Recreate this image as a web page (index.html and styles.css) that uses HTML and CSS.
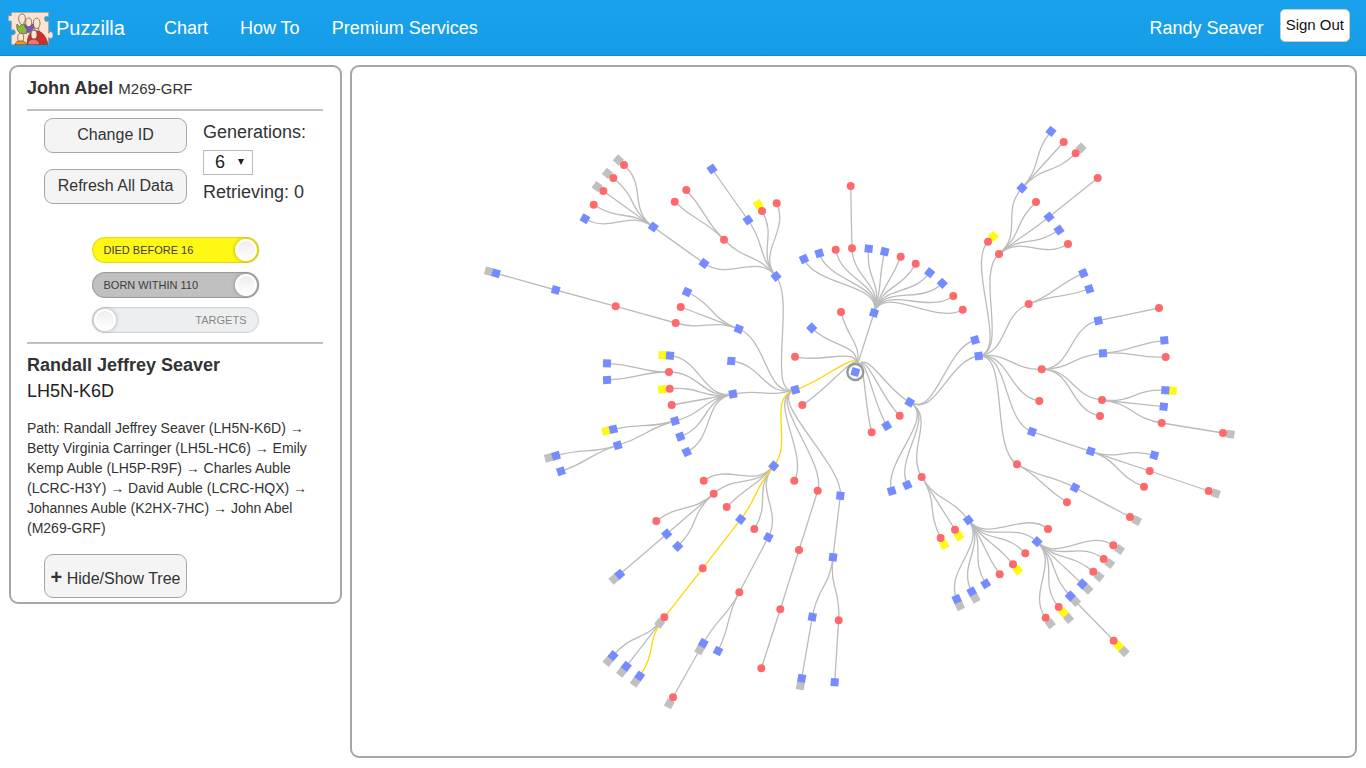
FILE: index.html
```html
<!DOCTYPE html>
<html lang="en">
<head>
<meta charset="utf-8">
<title>Puzzilla</title>
<link rel="stylesheet" href="styles.css">
</head>
<body>
<header class="navbar">
  <a class="brand" href="#">
    <svg class="logo" viewBox="0 0 135 99" aria-hidden="true">
      <path d="M10 1H122V15C113 10 107 15 110 23C112 31 118 29 122 27V64C126 56 135 58 135 69C135 81 126 82 122 76V98H10V68C15 71 22 68 22 61C22 53 15 51 10 55V27H1V11H10Z" fill="#fde3d0" stroke="#8f9294" stroke-width="2"/>
      <g stroke="#5b463c" stroke-width="2">
        <path d="M57 98C58 70 66 57 84 56C104 57 116 76 120 98Z" fill="#cf2f2b"/>
        <path d="M50 39L62 44L76 35L77 50L64 62L50 58Z" fill="#7f55c7"/>
        <path d="M27 36C24 47 30 62 40 66L57 64L57 52L50 44L52 37L42 35L34 44Z" fill="#82bd3e"/>
        <ellipse cx="42" cy="20" rx="10" ry="14" fill="#fde3d0"/>
        <path d="M36 31C37 41 49 41 48 31" fill="#fde3d0"/>
        <ellipse cx="62" cy="31" rx="9" ry="13" fill="#fde3d0"/>
        <ellipse cx="86" cy="34" rx="10" ry="16" fill="#fde3d0"/>
        <path d="M81 47L79 58M91 47L94 60" fill="none"/>
        <ellipse cx="38" cy="77" rx="9" ry="13" fill="#fde3d0"/>
        <path d="M21 98C22 82 55 84 56 98Z" fill="#ff9500"/>
        <ellipse cx="78" cy="68" rx="9" ry="13" fill="#fde3d0"/>
        <path d="M59 98C60 75 94 77 95 98Z" fill="#ff6d72"/>
      </g>
    </svg>
    <span>Puzzilla</span>
  </a>
  <nav class="menu">
    <a href="#">Chart</a>
    <a href="#">How To</a>
    <a href="#">Premium Services</a>
  </nav>
  <span class="user">Randy Seaver</span>
  <button class="sign-out" type="button">Sign Out</button>
</header>
<main class="workspace">
  <aside class="panel sidebar">
    <h1 class="person">John Abel <small>M269-GRF</small></h1>
    <section class="section controls">
      <div class="actions">
        <button class="btn" type="button">Change ID</button>
        <button class="btn" type="button">Refresh All Data</button>
      </div>
      <div class="settings">
        <label for="generations">Generations:</label>
        <span class="select-box">
          <select id="generations"><option>4</option><option>5</option><option selected>6</option></select>
        </span>
        <span>Retrieving: 0</span>
      </div>
    </section>
    <div class="toggles">
      <label class="toggle yellow"><input type="checkbox" checked><span>DIED BEFORE 16</span></label>
      <label class="toggle gray"><input type="checkbox" checked><span>BORN WITHIN 110</span></label>
      <label class="toggle"><input type="checkbox"><span>TARGETS</span></label>
    </div>
    <section class="section details">
      <h2 class="root-name">Randall Jeffrey Seaver</h2>
      <p class="root-id">LH5N-K6D</p>
      <p class="path">Path: Randall Jeffrey Seaver (LH5N-K6D) → Betty Virginia Carringer (LH5L-HC6) → Emily Kemp Auble (LH5P-R9F) → Charles Auble (LCRC-H3Y) → David Auble (LCRC-HQX) → Johannes Auble (K2HX-7HC) → John Abel (M269-GRF)</p>
      <button class="btn tree-btn" type="button"><b>+</b> Hide/Show Tree</button>
    </section>
  </aside>
  <section class="panel chart-panel" aria-label="Descendant chart">
    <svg id="chart" class="chart" viewBox="352 67 1003 689"></svg>
  </section>
</main>
<script src="chart.js"></script>
</body>
</html>
```
FILE: styles.css
```css
* { box-sizing: border-box; }

body {
  margin: 0;
  min-height: 100vh;
  display: flex;
  flex-direction: column;
  background: #fff;
  color: #333;
  font-family: "Liberation Sans", Arial, sans-serif;
  font-size: 16px;
}

button, select, input { font: inherit; color: inherit; margin: 0; }
h1, h2, p { margin: 0; }

.navbar {
  display: flex;
  align-items: center;
  height: 56px;
  padding: 0 16px 0 8px;
  border-bottom: 1px solid #0f88cb;
  background: linear-gradient(#1ba2ee, #149ce6);
  color: #fff;
  font-size: 18px;
  line-height: 22px;
}
.navbar a { color: #fff; text-decoration: none; }
.brand { display: flex; align-items: center; gap: 3px; font-size: 20px; }
.logo { width: 45px; height: 33px; margin-top: 2px; }
.brand span, .menu, .user { padding-top: 1px; }
.menu { display: flex; gap: 32px; margin-left: 39px; }
.user { margin-left: auto; }
.sign-out {
  height: 33px;
  margin: 0 0 4px 16px;
  padding: 0 5px 2px;
  border: 1px solid #ccc;
  border-radius: 5px;
  background: #fff;
  color: #111;
  font-size: 15px;
}

.workspace {
  flex: 1;
  display: flex;
  align-items: flex-start;
  gap: 8px;
  padding: 9px 9px 10px;
}
.panel { border: 2px solid #a6a6a6; border-radius: 9px; }
.sidebar { flex: 0 0 333px; padding: 8px 17px 4px 16px; }
.chart-panel { flex: 1; min-width: 0; align-self: stretch; }
.chart { display: block; width: 100%; height: 100%; }

.person { height: 34px; font-size: 18px; line-height: 26px; }
.person small { font-size: 15px; font-weight: normal; }
.section { border-top: 2px solid #c0c0c0; }

.controls { display: flex; gap: 16px; padding: 7px 0 0 17px; }
.actions { display: flex; flex-direction: column; gap: 16px; }
.btn {
  width: 143px;
  height: 35px;
  padding: 0 0 2px;
  border: 1px solid #a6a6a6;
  border-radius: 9px;
  background: #f4f4f4;
  font-size: 16px;
}
.settings {
  display: flex;
  flex-direction: column;
  align-items: flex-start;
  gap: 5px;
  padding-top: 2px;
  font-size: 18px;
  line-height: 25px;
}
.select-box { position: relative; display: flex; }
.select-box select {
  width: 50px;
  height: 25px;
  padding: 0 0 2px 11px;
  border: 1px solid #bbb;
  border-radius: 0;
  background: #fff;
  color: #222;
  line-height: 20px;
  appearance: none;
}
.select-box::after {
  content: "";
  position: absolute;
  right: 9px;
  top: 9px;
  border: solid transparent;
  border-width: 6px 3px 0;
  border-top-color: #222;
  pointer-events: none;
}

.toggles {
  display: flex;
  flex-direction: column;
  align-items: center;
  gap: 9px;
  padding: 32px 0 9px;
}
.toggle {
  position: relative;
  width: 167px;
  height: 26px;
  padding: 0 12px;
  border-radius: 13px;
  background: #eceeef;
  box-shadow: inset 0 0 1px 1px rgba(0, 0, 0, .12);
  color: #888;
  font-size: 11px;
  line-height: 26px;
  text-align: right;
}
.toggle:has(:checked) { text-align: left; color: #3c3c3c; }
.toggle.yellow { background: #fff714; }
.toggle.gray { background: #c0c0c0; }
.toggle.gray { box-shadow: inset 0 0 1px 1px rgba(0, 0, 0, .2); }
.toggle input {
  appearance: none;
  position: absolute;
  top: 2px;
  left: 2px;
  width: 22px;
  height: 22px;
  border: 2px solid #fff;
  border-radius: 50%;
  background: linear-gradient(#eee, #fff);
  box-shadow: 0 0 4px rgba(0, 0, 0, .3);
}
.toggle input:checked { left: auto; right: 2px; }

.details { padding-top: 8px; }
.root-name { font-size: 18px; line-height: 26px; }
.root-id { font-size: 18px; line-height: 26px; color: #222; }
.path { margin: 14px 0 16px; font-size: 14px; line-height: 20px; }
.tree-btn { display: block; height: 44px; margin-left: 17px; padding: 2px 0 0; }
.tree-btn b { font-size: 20px; }

.link { fill: none; stroke: #bbb; stroke-width: 1.3px; }
.link.gold { stroke: #ffd700; }
.male { fill: #748cff; }
.female { fill: #ff696b; }
.mark-y { fill: #fffa12; }
.mark-g { fill: #c0c0c0; }
.focus { fill: #fff; stroke: #999; stroke-width: 2.4px; }
```
FILE: chart.js
```js
// Outline of the tree: indentation is the generation.
// Each row: m|f, x, y, marks (y = died young, g = born within 110), * = on the path.
const outline = `
m 855.3 372
 m 795.3 389.7 *
  m 776 276.3
   m 704 263.3
    m 653.3 227
     m 585 218.7
     f 593.7 204.7
     f 603.3 191 g
     f 613.3 178 g
     f 624 165 g
   f 724 239.7
    f 686.3 190
    f 674.7 201.7
   m 748 220
    m 712 169
   f 762 211 y
   f 776.7 203.3
  m 738.7 329
   m 687 292
   f 680.7 307
   f 675.7 323
    f 615.7 306.3
     m 555.7 290
      m 496 273.3 g
  m 731.3 361
  m 733 394
   m 670 355.7 y
   f 669 372
    m 607 363.3
    m 607 380
   f 669.7 388.7 y
   f 671.7 405
   m 675 421
    m 613.3 429.3 y
    m 617.7 445.3
     m 556 455.7 g
     m 561 471.3
   m 680.3 436.7
   m 686.7 452
  m 773.7 466 *
   f 703.7 480.7
   f 713.7 493.7
    f 656.3 521
    m 666.7 534
     m 619.7 574.3 g
    m 677.7 546.3
   f 726.7 507
   m 740.7 519.3 *
    f 702.7 568.3 *
     f 664.3 617.3 g *
      m 613 655.7 g
      m 626.3 666.3 g
      m 639.7 676 g *
   f 754.3 529
   m 768.3 537.3
    f 739.3 592.3
     m 703.3 643.3 g
      f 673 697.3 g
     m 718 651
  f 794.3 480.7
  f 817.7 490.7
   f 799 550
    f 780.3 609.3
     f 761.3 668.3
  m 840.3 495.7
   m 833 557.3
    m 812.3 617
     m 801.7 678.3 g
    f 838.7 620.3
     m 834.7 682.3
 f 795 356.7
 m 811.7 328
 f 841 312
 m 874 313
  m 804 259
  m 819.3 253.3
  f 835.7 249.7
  f 852 248.3
   f 850.7 186
  m 868.7 248.7
  m 884.7 251.7
  f 900.7 256.7
  f 915.7 263.7
  m 929.7 272.7
  m 942.3 283.3
  f 953.3 296
  f 962.7 309.7
 f 802.3 405
 f 871.7 432.3
 m 886.7 425.7
 f 899.7 415.7
 m 909.7 402.3
  m 975 340
  m 978.7 356
   f 988 241.7 y
   f 999 254
    m 1022 188
     m 1051 131.3
     f 1063.7 142
     f 1075.7 153.3 g
    f 1036 202
    m 1049 217
     f 1097.7 178
    m 1059 230
    f 1068 244
   f 1028.7 304
    m 1083.3 273.3
    m 1089.3 289
   f 1041.7 369.3
    m 1098.3 320.7
     f 1159 308
    m 1103 353.3
     m 1164.3 340.3
     f 1165.7 357
    f 1102 400
     m 1165.3 390.3 y
     m 1163.7 406.7
     f 1161.7 423
      f 1223 433 g
    f 1100 416
   f 1039.3 401
   m 1032 431.7
    m 1090.7 451.3
     m 1154.3 455.3
     f 1149.7 471
      f 1208.7 491 g
     f 1144 486.7
   f 1017 464.3
    m 1075 487.7
     f 1130 517 g
    f 1067 502.3
  m 891.7 491
  m 907.3 485
  f 921.7 477
   f 940.7 538 y
   f 955 529.7 y
   m 968.3 520
    m 956.7 599 g
    m 971.7 591.7 g
    m 985.7 583.7
    f 999.7 574.3
    f 1013 564.3 y
    f 1025.3 553.3
    m 1037 541.7
     f 1045.7 617.7 g
     f 1058.7 607 yg
     m 1070.3 596 g
      f 1113.7 640.7 yg
     m 1082.3 584 g
     f 1093.3 571.7 g
     f 1103.7 559 g
     f 1113.3 545.3 g
    f 1048 529
`;

const ROOT_ANGLE = -73 * Math.PI / 180;
const nodes = [];
const ancestors = [];
for (const line of outline.split("\n")) {
  if (!line.trim()) continue;
  const depth = line.search(/\S/);
  const [kind, x, y, ...flags] = line.trim().split(" ");
  const node = {
    kind, x: +x, y: +y, depth,
    marks: (flags[0] || "").replace("*", ""),
    gold: flags.includes("*"),
    parent: ancestors[depth - 1]
  };
  ancestors[depth] = node;
  const root = ancestors[0];
  node.r = Math.hypot(node.x - root.x, node.y - root.y);
  node.a = depth ? Math.atan2(node.y - root.y, node.x - root.x) : ROOT_ANGLE;
  nodes.push(node);
}

const root = nodes[0];
const polar = (a, r) => [root.x + r * Math.cos(a), root.y + r * Math.sin(a)];
const svg = document.getElementById("chart");

function add(tag, className, attrs) {
  const el = document.createElementNS("http://www.w3.org/2000/svg", tag);
  el.setAttribute("class", className);
  for (const name in attrs) el.setAttribute(name, attrs[name]);
  svg.appendChild(el);
}

function addSquare(className, node, offset) {
  const x = node.x + offset * Math.cos(node.a);
  const y = node.y + offset * Math.sin(node.a);
  const turn = node.a * 180 / Math.PI;
  add("rect", className, {
    x: -4, y: -4, width: 8, height: 8,
    transform: `translate(${x} ${y}) rotate(${turn})`
  });
}

// Radial diagonals, gold ones last so that they lie on top.
const links = nodes.filter(n => n.parent).sort((a, b) => a.gold - b.gold);
for (const n of links) {
  const p = n.parent;
  const mid = (n.r + p.r) / 2;
  add("path", n.gold ? "link gold" : "link", {
    d: `M${p.x},${p.y}C${polar(p.a, mid)} ${polar(n.a, mid)} ${n.x},${n.y}`
  });
}

add("circle", "focus", { cx: root.x, cy: root.y, r: 8 });

for (const n of nodes) {
  [...n.marks].forEach((m, i) => addSquare("mark-" + m, n, 7.5 * (i + 1)));
  if (n.kind === "m") addSquare("male", n, 0);
  else add("circle", "female", { cx: n.x, cy: n.y, r: 4 });
}
```
